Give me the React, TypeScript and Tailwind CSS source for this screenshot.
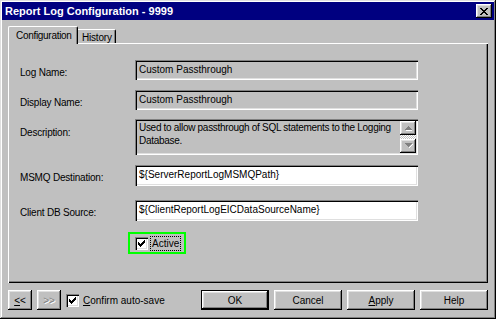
import React from "react";

const font = { fontFamily: '"Liberation Sans", Arial, sans-serif' };

const sunken =
  "shadow-[inset_1px_1px_#808080,inset_2px_2px_#000,inset_-1px_-1px_#fff,inset_-2px_-2px_#dfdfdf]";
const raised =
  "shadow-[inset_-1px_-1px_#000,inset_1px_1px_#fff,inset_-2px_-2px_#808080,inset_2px_2px_#dfdfdf]";

function Check() {
  return (
    <svg width="7" height="7" viewBox="0 0 7 7" shapeRendering="crispEdges">
      <path
        d="M0 2h1v3h-1zM1 3h1v3h-1zM2 4h1v3h-1zM3 3h1v3h-1zM4 2h1v3h-1zM5 1h1v3h-1zM6 0h1v3h-1z"
        fill="#000"
      />
    </svg>
  );
}

function CheckBox() {
  return (
    <div className={`w-[13px] h-[13px] bg-white ${sunken} flex items-center justify-center shrink-0`}>
      <Check />
    </div>
  );
}

function Arrow({ up }: { up?: boolean }) {
  return (
    <svg width="9" height="6" viewBox="0 0 9 6" shapeRendering="crispEdges">
      {up ? (
        <>
          <path d="M2 5h6v1h-6zM6 4h1v1h-1zM5 3h1v1h-1z" fill="#fff" />
          <path d="M4 1h1v1h-1zM3 2h3v1h-3zM2 3h5v1h-5zM1 4h7v1h-7z" fill="#808080" />
        </>
      ) : (
        <>
          <path d="M8 1h1v1h-1zM7 2h1v1h-1zM6 3h1v1h-1zM5 4h1v1h-1z" fill="#fff" />
          <path d="M1 0h7v1h-7zM2 1h5v1h-5zM3 2h3v1h-3zM4 3h1v1h-1z" fill="#808080" />
        </>
      )}
    </svg>
  );
}

function Label({ children, top }: { children: React.ReactNode; top?: boolean }) {
  return (
    <div
      className={`w-[115px] shrink-0 text-[10px] leading-[13px] tracking-[-0.2px] text-black ${
        top ? "pt-[7px] self-start" : "pt-[4px]"
      }`}
    >
      {children}
    </div>
  );
}

function Field({ value, white, h = "h-[20px]" }: { value: string; white?: boolean; h?: string }) {
  return (
    <div
      className={`w-[283px] ${h} ${white ? "bg-white" : "bg-[#c0c0c0]"} ${sunken} pl-[4px] pt-[3px] text-[10px] leading-[13px] text-black whitespace-nowrap overflow-hidden`}
    >
      {value}
    </div>
  );
}

function Button({
  children,
  w = "w-[68px]",
  def,
  disabled,
}: {
  children: React.ReactNode;
  w?: string;
  def?: boolean;
  disabled?: boolean;
}) {
  const inner = (
    <div
      className={`${def ? "w-full h-full" : `${w} h-[20px]`} bg-[#c0c0c0] ${raised} flex items-center justify-center text-[10px] leading-[13px] ${
        disabled ? "text-[#808080] [text-shadow:1px_1px_#fff]" : "text-black"
      }`}
    >
      {children}
    </div>
  );
  if (def) {
    return <div className={`${w} h-[20px] border border-black`}>{inner}</div>;
  }
  return inner;
}

export default function App() {
  return (
    <div
      style={font}
      className="w-[496px] h-[319px] bg-[#c0c0c0] p-[2px] flex flex-col shadow-[inset_-1px_-1px_#000,inset_1px_1px_#dfdfdf,inset_-2px_-2px_#808080,inset_2px_2px_#fff] overflow-hidden"
    >
      {/* Title bar */}
      <div className="h-[18px] bg-[#000080] flex items-center justify-between pl-[3px] pr-[2px] shrink-0">
        <span className="text-white font-bold text-[11px] leading-[13px]">Report Log Configuration - 9999</span>
        <div className={`w-[16px] h-[14px] bg-[#c0c0c0] ${raised} flex items-center justify-center`}>
          <svg width="8" height="7" viewBox="0 0 8 7" shapeRendering="crispEdges">
            <path
              d="M0 0h2v1h-2zM6 0h2v1h-2zM1 1h2v1h-2zM5 1h2v1h-2zM2 2h4v1h-4zM3 3h2v1h-2zM2 4h4v1h-4zM1 5h2v1h-2zM5 5h2v1h-2zM0 6h2v1h-2zM6 6h2v1h-2z"
              fill="#000"
            />
          </svg>
        </div>
      </div>

      {/* Body */}
      <div className="flex-1 flex flex-col px-[6px] pt-[6px]">
        {/* Tabs */}
        <div className="h-[17px] flex items-end relative z-10 shrink-0">
          <div className="w-[70px] h-[18px] -mb-px bg-[#c0c0c0] border-t border-l border-white border-r border-r-black rounded-t-[2px] shadow-[inset_-1px_0_#808080] flex items-start pt-[2px] pl-[7px] text-[10px] leading-[13px] tracking-[-0.3px] text-black">
            Configuration
          </div>
          <div className="w-[38px] h-[14px] bg-[#c0c0c0] border-t border-white border-r border-r-black rounded-tr-[2px] shadow-[inset_-1px_0_#808080] flex items-start pt-[1px] pl-[4px] text-[10px] leading-[13px] tracking-[-0.2px] text-black">
            History
          </div>
        </div>

        {/* Panel */}
        <div className="h-[240px] shrink-0 bg-[#c0c0c0] shadow-[inset_1px_1px_#fff,inset_-1px_-1px_#000,inset_-2px_-2px_#808080] pl-[12px] pt-[17px] flex flex-col">
          <div className="flex items-center">
            <Label>Log Name:</Label>
            <Field value="Custom Passthrough" />
          </div>
          <div className="flex items-center mt-[10px]">
            <Label>Display Name:</Label>
            <Field value="Custom Passthrough" />
          </div>
          <div className="flex items-center mt-[9px]">
            <Label top>Description:</Label>
            <div className={`w-[283px] h-[36px] bg-[#c0c0c0] ${sunken} p-[2px] flex`}>
              <div className="flex-1 pl-[2px] text-[10px] leading-[13px] tracking-[-0.3px] text-black whitespace-nowrap overflow-hidden">
                Used to allow passthrough of SQL statements to the Logging
                <br />
                Database.
              </div>
              <div className="w-[16px] flex flex-col shrink-0">
                <div className={`h-[14px] bg-[#c0c0c0] ${raised} flex items-center justify-center`}>
                  <Arrow up />
                </div>
                <div className="h-[4px] bg-[repeating-conic-gradient(#fff_0_25%,#c0c0c0_0_50%)] bg-[length:2px_2px]" />
                <div className={`h-[14px] bg-[#c0c0c0] ${raised} flex items-center justify-center`}>
                  <Arrow />
                </div>
              </div>
            </div>
          </div>
          <div className="flex items-center mt-[10px]">
            <Label>MSMQ Destination:</Label>
            <Field value="${ServerReportLogMSMQPath}" white h="h-[21px]" />
          </div>
          <div className="flex items-center mt-[14px]">
            <Label>Client DB Source:</Label>
            <Field value="${ClientReportLogEICDataSourceName}" white h="h-[21px]" />
          </div>
          <div className="mt-[11px] ml-[108px] w-[58px] h-[22px] border-2 border-[#00ff00] flex items-center pl-[5px]">
            <CheckBox />
            <div className="ml-[2px] border border-dotted border-black px-[1px] text-[10px] leading-[13px] text-black">
              Active
            </div>
          </div>
        </div>

        {/* Bottom row */}
        <div className="mt-[7px] h-[20px] flex items-center justify-between">
          <div className="flex items-center">
            <Button w="w-[24px]">
              <span>
                <span className="underline">&lt;</span>&lt;
              </span>
            </Button>
            <div className="ml-[5px]">
              <Button w="w-[24px]" disabled>
                &gt;&gt;
              </Button>
            </div>
            <div className="ml-[5px]">
              <CheckBox />
            </div>
            <span className="ml-[4px] text-[10px] leading-[13px] text-black">
              <span className="underline">C</span>onfirm auto-save
            </span>
          </div>
          <div className="flex items-center gap-[5px]">
            <Button def>OK</Button>
            <Button>Cancel</Button>
            <Button>
              <span>
                <span className="underline">A</span>pply
              </span>
            </Button>
            <Button>Help</Button>
          </div>
        </div>
      </div>
    </div>
  );
}
